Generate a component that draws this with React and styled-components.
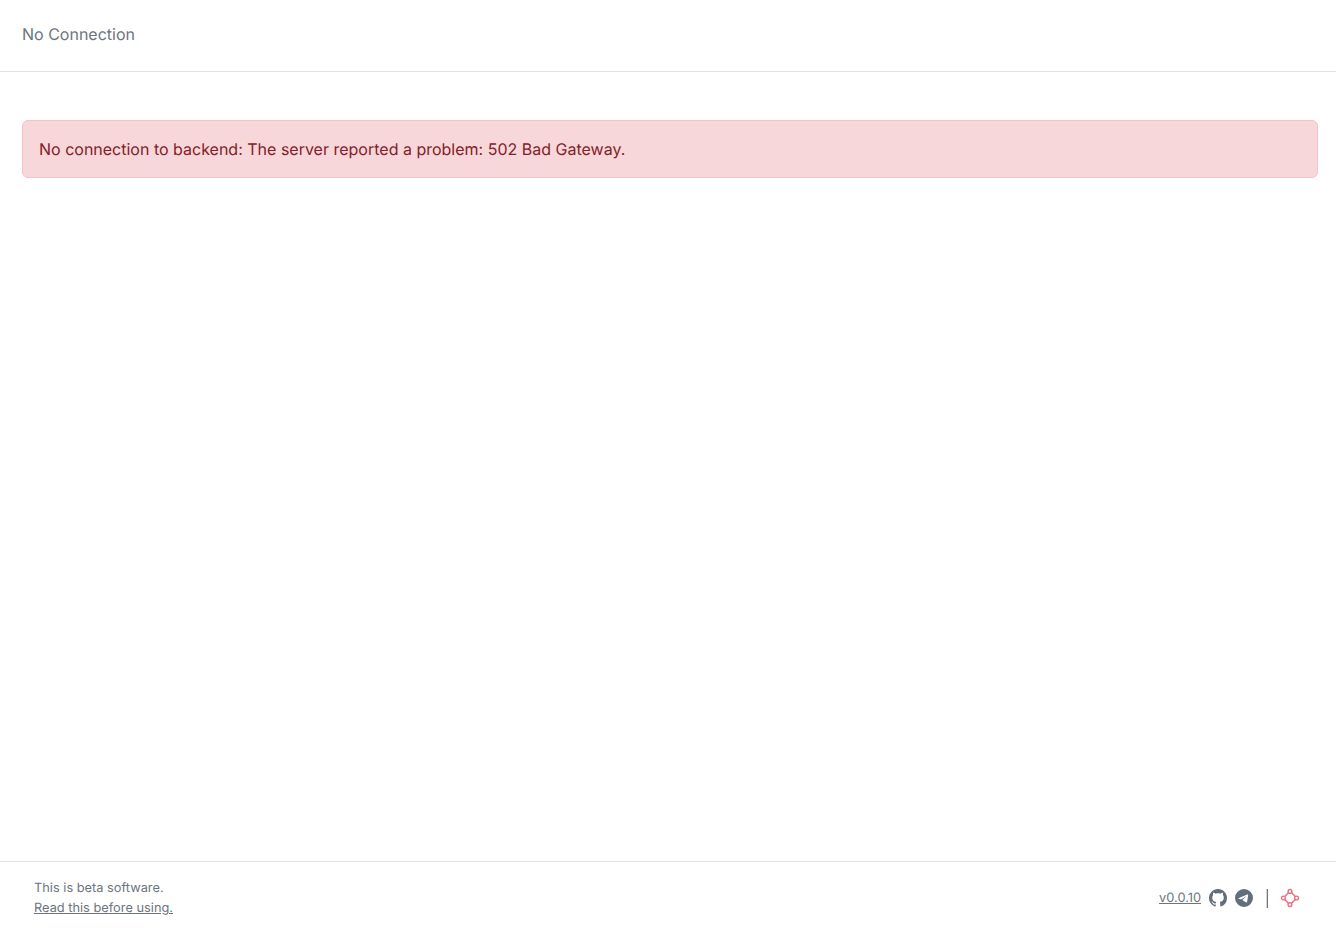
import React from "react";
import styled, { createGlobalStyle } from "styled-components";
import { BsGithub, BsTelegram } from "react-icons/bs";

const Global = createGlobalStyle`
  html, body { margin: 0; padding: 0; background: #fff; }
  body {
    font-family: Inter, "Liberation Sans", sans-serif;
    text-rendering: geometricPrecision;
  }
`;

const Page = styled.div`
  height: 928px;
  display: flex;
  flex-direction: column;
  overflow: hidden;
`;

const Header = styled.header`
  height: 67px;
  flex: none;
  border-bottom: 1px solid #dee2e6;
  display: flex;
  align-items: center;
  padding: 0 0 4px 22px;
`;

const Title = styled.span`
  font-size: 16px;
  color: #6c757d;
`;

const Main = styled.main`
  flex: 1;
  padding: 48px 18px 0 22px;
`;

const Alert = styled.div`
  height: 58px;
  box-sizing: border-box;
  display: flex;
  align-items: center;
  padding: 0 16px;
  font-size: 16px;
  color: #842029;
  background: #f8d7da;
  border: 1px solid #f5c2c7;
  border-radius: 6px;
`;

const Footer = styled.footer`
  height: 60px;
  flex: none;
  border-top: 1px solid #dee2e6;
  display: flex;
  align-items: center;
  justify-content: space-between;
  padding: 6px 36px 0 34px;
  font-size: 12.8px;
  line-height: 20px;
  color: #6c757d;
`;

const Note = styled.div`
  display: flex;
  flex-direction: column;
  padding-top: 2px;
`;

const TextLink = styled.a`
  color: #6c757d;
  text-decoration: underline;
`;

const Version = styled(TextLink)`
  padding-top: 2px;
`;

const Links = styled.div`
  display: flex;
  align-items: center;
`;

const IconLink = styled.a`
  display: flex;
  margin-left: 8px;
  color: #626e7b;
`;

const Divider = styled.span`
  width: 2px;
  height: 19px;
  margin: 0 12px 0 13px;
  background: linear-gradient(90deg, #f5d0a0 50%, #4f7fa8 50%);
`;

const Logo = () => (
  <svg width="20" height="20" viewBox="0 0 20 20" fill="none" stroke="#ea6f83" strokeWidth="1.4">
    <path d="M8.7 4.5 4.5 8.7M11.3 4.5 15.5 8.7M4.5 11.3 8.7 15.5M15.5 11.3 11.3 15.5" />
    <circle cx="10" cy="3.4" r="1.9" />
    <circle cx="3.4" cy="10" r="1.9" />
    <circle cx="16.6" cy="10" r="1.9" />
    <circle cx="10" cy="16.6" r="1.9" />
  </svg>
);

export default function App() {
  return (
    <Page>
      <Global />
      <Header>
        <Title>No Connection</Title>
      </Header>
      <Main>
        <Alert>No connection to backend: The server reported a problem: 502 Bad Gateway.</Alert>
      </Main>
      <Footer>
        <Note>
          <span>This is beta software.</span>
          <TextLink href="#">Read this before using.</TextLink>
        </Note>
        <Links>
          <Version href="#">v0.0.10</Version>
          <IconLink href="#"><BsGithub size={18} /></IconLink>
          <IconLink href="#"><BsTelegram size={18} /></IconLink>
          <Divider />
          <Logo />
        </Links>
      </Footer>
    </Page>
  );
}
